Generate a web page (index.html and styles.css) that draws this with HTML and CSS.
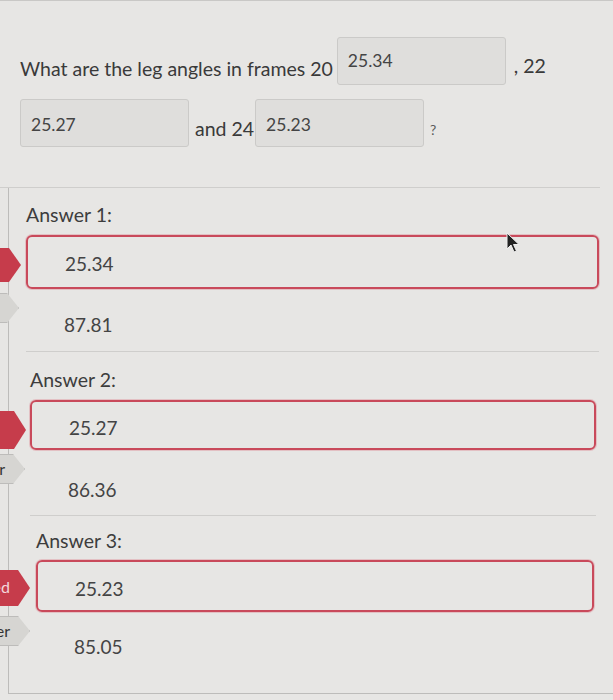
FILE: index.html
```html
<!DOCTYPE html>
<html lang="en">
<head>
	<meta charset="UTF-8">
	<title>Leg angles</title>
	<link rel="stylesheet" href="styles.css">
</head>
<body>
	<div id="page">
		<div class="question">
			<div class="q-line">
				<span class="q-text">What are the leg angles in frames 20</span>
				<span class="field f-wide">25.34</span>
				<span class="q-text comma">, 22</span>
			</div>
			<div class="q-line line2">
				<span class="field">25.27</span>
				<span class="q-text and">and 24</span>
				<span class="field">25.23</span>
				<span class="q-text mark">?</span>
			</div>
		</div>

		<div class="answers">
			<div class="answer a1">
				<div class="label">Answer 1:</div>
				<div class="option selected"><span class="tag red">Selected</span>25.34</div>
				<div class="option other"><span class="tag grey">Other</span>87.81</div>
			</div>
			<div class="answer a2">
				<div class="label">Answer 2:</div>
				<div class="option selected"><span class="tag red">Selected</span>25.27</div>
				<div class="option other"><span class="tag grey">Other</span>86.36</div>
			</div>
			<div class="answer a3">
				<div class="label">Answer 3:</div>
				<div class="option selected"><span class="tag red">Selected</span>25.23</div>
				<div class="option other"><span class="tag grey">Other</span>85.05</div>
			</div>
		</div>

		<svg class="cursor" width="14" height="22" viewBox="0 0 14 22">
			<path d="M1 1 L1 17 L5 13 L8 20 L10.5 19 L7.5 12.5 L13 12.5 Z" fill="#222" stroke="#eee" stroke-width="1"/>
		</svg>
	</div>
</body>
</html>
```

FILE: styles.css
```css
* { margin: 0; padding: 0; box-sizing: border-box;}
body { background: #e7e6e4; font-family: Lato, "Noto Sans", sans-serif; color: #3f3f3f;}
#page { position: relative; width: 613px; height: 700px; overflow: hidden; border-top: 1px solid #c9c8c6;}

/* question */
.question { padding: 36px 0 40px 20px; margin-right: 13px; border-bottom: 1px solid #cfcecc;}
.q-line { display: flex; align-items: flex-start;}
.q-line.line2 { margin-top: 14px;}
.q-text { font-size: 19.5px; line-height: 22px; margin-top: 21px; color: #3a3a3a;}
.comma { margin-left: 8px; margin-top: 18px;}
.and { margin: 19px 1px 0 6px;}
.mark { font-size: 14px; margin: 20px 0 0 6px; color: #5a5a5a;}
.field { display: block; width: 169px; height: 48px; padding: 14px 10px 0; font-size: 17.5px; line-height: 20px; background: #dfdedc; border: 1px solid #cbcac8; border-radius: 3px; color: #444;}
.f-wide { margin-left: 4px; padding-top: 13px;}
.line2 .field { padding-top: 15px;}

/* answers */
.answers { margin-left: 8px; border-left: 1px solid #bdbcba; border-bottom: 1px solid #bdbcba; padding-bottom: 23px;}
.answer { border-bottom: 1px solid #cfcecc; padding-top: 17px;}
.answer:last-child { border-bottom: none;}
.a1 { margin: 0 14px 0 17px; padding-top: 16px;}
.a2 { margin: 0 17px 0 21px;}
.a3 { margin: 0 19px 0 27px; padding-top: 14px;}
.label { font-size: 19.5px; line-height: 22px; color: #3d3d3d;}
.option { position: relative; font-size: 19px; line-height: 20px; color: #444;}
.selected { margin-top: 9px; height: 54px; padding: 17px 0 0 37px; border: 2px solid #c94a5b; border-radius: 6px; box-shadow: 0 0 0 1px rgba(220, 120, 135, .35);}
.a2 .selected { height: 50px; padding-top: 16px; margin-top: 9px;}
.a3 .selected { height: 52px; margin-top: 8px;}
.other { height: 62px; padding: 26px 0 0 38px;}
.a2 .other { height: 65px; padding-top: 30px;}
.a3 .other { height: 58px; padding-top: 25px;}

/* side tags */
.tag { position: absolute; top: 11px; right: 100%; margin-right: 7px; height: 34px; padding: 7px 26px 0 10px; font-size: 16px; line-height: 20px; white-space: nowrap; clip-path: polygon(0 0, calc(100% - 12px) 0, 100% 50%, calc(100% - 12px) 100%, 0 100%);}
.red { background: #c63c4b; color: #f3d6da;}
.grey { background: #d6d5d2; color: #333; top: 4px; height: 30px; padding-top: 5px; box-shadow: inset 0 0 0 1px #bdbcba;}
.a1 .tag { padding-right: 32px;}
.a2 .tag.red { top: 9px; height: 38px; padding-top: 9px; margin-right: 6px; padding-right: 34px;}
.a2 .tag.grey { padding-right: 20px; margin-right: 5px;}
.a3 .tag.red { top: 8px; height: 36px; margin-right: 8px; padding-right: 20px;}
.a3 .tag.grey { padding-right: 20px; margin-right: 6px;}

.cursor { position: absolute; left: 506px; top: 231px;}
```
